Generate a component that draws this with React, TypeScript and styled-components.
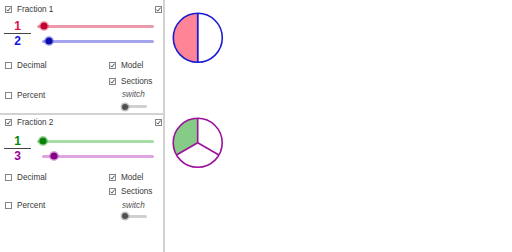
import React from "react";
import styled, { createGlobalStyle } from "styled-components";

const Global = createGlobalStyle`
  html, body { margin: 0; padding: 0; background: #fff; }
  body { font-family: "Liberation Sans", Arial, sans-serif; }
`;

const Page = styled.div`
  display: flex;
  width: 512px;
  height: 252px;
  overflow: hidden;
  background: #fff;
`;

const Panel = styled.aside`
  width: 165px;
  height: 252px;
  box-sizing: border-box;
  border-right: 2px solid #d2d2d2;
  display: flex;
  flex-direction: column;
  flex-shrink: 0;
`;

const Section = styled.section<{ $divider?: boolean; $padTop: number }>`
  box-sizing: border-box;
  height: ${(p) => (p.$divider ? "115px" : "auto")};
  flex: ${(p) => (p.$divider ? "0 0 auto" : "1")};
  padding: ${(p) => p.$padTop}px 0 0 5px;
  border-bottom: ${(p) => (p.$divider ? "2px solid #d2d2d2" : "none")};
  display: flex;
  flex-direction: column;
`;

const Header = styled.div`
  display: flex;
  align-items: center;
  justify-content: space-between;
  height: 10px;
  margin-right: 1px;
`;

const Label = styled.label`
  display: flex;
  align-items: center;
  gap: 5px;
  height: 10px;
  font-size: 8.2px;
  color: #383838;
  white-space: nowrap;
`;

const Box = styled.span`
  box-sizing: border-box;
  width: 7px;
  height: 7px;
  border: 1px solid #858585;
  background: #fff;
  display: inline-flex;
  align-items: center;
  justify-content: center;
  flex-shrink: 0;
`;

const Check = ({ on }: { on?: boolean }) => (
  <Box>
    {on && (
      <svg width="5" height="5" viewBox="0 0 5 5">
        <path d="M0.4 2.6 L1.9 4.1 L4.6 0.6" fill="none" stroke="#3a3a3a" strokeWidth="0.9" />
      </svg>
    )}
  </Box>
);

const FractionRow = styled.div<{ $gap: number }>`
  display: flex;
  margin-top: ${(p) => p.$gap}px;
  margin-left: -1px;
`;

const Fraction = styled.div`
  width: 27px;
  display: flex;
  flex-direction: column;
  align-items: center;
  flex-shrink: 0;
`;

const Num = styled.div<{ $color: string }>`
  height: 14px;
  line-height: 14px;
  font-size: 12px;
  font-weight: bold;
  color: ${(p) => p.$color};
`;

const Bar = styled.div`
  width: 100%;
  height: 1px;
  background: #444;
`;

const Sliders = styled.div`
  flex: 1;
  display: flex;
  flex-direction: column;
  gap: 1px;
  margin-left: 6px;
  margin-right: 9px;
`;

const SliderRow = styled.div<{ $indent?: number }>`
  height: 14px;
  display: flex;
  align-items: center;
  padding-left: ${(p) => p.$indent ?? 0}px;
`;

const Track = styled.div<{ $color: string; $w?: number }>`
  position: relative;
  height: 3px;
  border-radius: 1.5px;
  width: ${(p) => (p.$w ? `${p.$w}px` : "100%")};
  background: ${(p) => p.$color};
`;

const Thumb = styled.span<{ $color: string; $halo: string; $size?: number }>`
  position: absolute;
  top: 50%;
  width: ${(p) => p.$size ?? 7}px;
  height: ${(p) => p.$size ?? 7}px;
  border-radius: 50%;
  background: ${(p) => p.$color};
  box-shadow: 0 0 0 1.5px ${(p) => p.$halo};
  transform: translate(-50%, -50%);
`;

const Options = styled.div<{ $top: number; $rows: string }>`
  display: grid;
  grid-template-columns: 104px auto;
  grid-template-rows: ${(p) => p.$rows};
  align-items: start;
  margin-top: ${(p) => p.$top}px;
`;

const Cell = styled.div<{ $col: number; $row: number }>`
  grid-column: ${(p) => p.$col};
  grid-row: ${(p) => p.$row};
`;

const SwitchLabel = styled.div`
  height: 10px;
  line-height: 10px;
  margin-left: 13px;
  font-size: 8.2px;
  font-style: italic;
  color: #555;
`;

const SwitchRow = styled.div`
  height: 10px;
  display: flex;
  align-items: center;
  margin-left: 16px;
`;

const Graphics = styled.main`
  flex: 1;
  height: 252px;
`;

type Frac = {
  title: string;
  num: string;
  den: string;
  numColor: string;
  denColor: string;
  numTrack: string;
  denTrack: string;
  numThumb: string;
  denThumb: string;
  numHalo: string;
  denHalo: string;
  numPos: number;
  denPos: number;
};

const ControlBlock = ({
  f,
  divider,
  padTop,
  fracGap,
  optTop,
  rows,
}: {
  f: Frac;
  divider?: boolean;
  padTop: number;
  fracGap: number;
  optTop: number;
  rows: string;
}) => (
  <Section $divider={divider} $padTop={padTop}>
    <Header>
      <Label>
        <Check on />
        {f.title}
      </Label>
      <Check on />
    </Header>
    <FractionRow $gap={fracGap}>
      <Fraction>
        <Num $color={f.numColor}>{f.num}</Num>
        <Bar />
        <Num $color={f.denColor}>{f.den}</Num>
      </Fraction>
      <Sliders>
        <SliderRow>
          <Track $color={f.numTrack}>
            <Thumb $color={f.numThumb} $halo={f.numHalo} style={{ left: f.numPos }} />
          </Track>
        </SliderRow>
        <SliderRow $indent={5}>
          <Track $color={f.denTrack}>
            <Thumb $color={f.denThumb} $halo={f.denHalo} style={{ left: f.denPos }} />
          </Track>
        </SliderRow>
      </Sliders>
    </FractionRow>
    <Options $top={optTop} $rows={rows}>
      <Cell $col={1} $row={1}>
        <Label>
          <Check />
          Decimal
        </Label>
      </Cell>
      <Cell $col={2} $row={1}>
        <Label>
          <Check on />
          Model
        </Label>
      </Cell>
      <Cell $col={2} $row={2}>
        <Label>
          <Check on />
          Sections
        </Label>
      </Cell>
      <Cell $col={1} $row={3}>
        <Label>
          <Check />
          Percent
        </Label>
      </Cell>
      <Cell $col={2} $row={3}>
        <SwitchLabel>switch</SwitchLabel>
      </Cell>
      <Cell $col={2} $row={4}>
        <SwitchRow>
          <Track $color="#d0d0d0" $w={22}>
            <Thumb $color="#505050" $halo="rgba(80,80,80,0.35)" $size={6} style={{ left: 0 }} />
          </Track>
        </SwitchRow>
      </Cell>
    </Options>
  </Section>
);

const frac1: Frac = {
  title: "Fraction 1",
  num: "1",
  den: "2",
  numColor: "#e0103c",
  denColor: "#1414dc",
  numTrack: "#eb9aab",
  denTrack: "#a4a4ee",
  numThumb: "#c4002c",
  denThumb: "#0c0ca8",
  numHalo: "rgba(220,60,100,0.45)",
  denHalo: "rgba(60,60,220,0.4)",
  numPos: 7,
  denPos: 7,
};

const frac2: Frac = {
  title: "Fraction 2",
  num: "1",
  den: "3",
  numColor: "#008a00",
  denColor: "#9a009a",
  numTrack: "#a6dca6",
  denTrack: "#e0a4e0",
  numThumb: "#0a820a",
  denThumb: "#840084",
  numHalo: "rgba(40,160,40,0.45)",
  denHalo: "rgba(180,60,180,0.45)",
  numPos: 6,
  denPos: 12,
};

const r = 24.5;
const c1 = { x: 32.8, y: 37.8 };
const c2 = { x: 32.7, y: 142.8 };
const a210 = { x: c2.x - r * Math.cos(Math.PI / 6), y: c2.y + r * Math.sin(Math.PI / 6) };
const a330 = { x: c2.x + r * Math.cos(Math.PI / 6), y: c2.y + r * Math.sin(Math.PI / 6) };

export default function App() {
  return (
    <>
      <Global />
      <Page>
        <Panel>
          <ControlBlock f={frac1} divider padTop={4} fracGap={5} optTop={12} rows="16px 14px 11.5px 10px" />
          <ControlBlock f={frac2} padTop={2} fracGap={7} optTop={9.5} rows="14px 14px 10.5px 10px" />
        </Panel>
        <Graphics>
          <svg width="347" height="252" viewBox="0 0 347 252">
            <path
              d={`M${c1.x} ${c1.y - r} A${r} ${r} 0 0 0 ${c1.x} ${c1.y + r} Z`}
              fill="#ff8496"
            />
            <circle cx={c1.x} cy={c1.y} r={r} fill="none" stroke="#1c1cd4" strokeWidth="1.6" />
            <line x1={c1.x} y1={c1.y - r} x2={c1.x} y2={c1.y + r} stroke="#1c1cd4" strokeWidth="1.8" />

            <path
              d={`M${c2.x} ${c2.y} L${c2.x} ${c2.y - r} A${r} ${r} 0 0 0 ${a210.x} ${a210.y} Z`}
              fill="#86cc86"
            />
            <circle cx={c2.x} cy={c2.y} r={r} fill="none" stroke="#9c109c" strokeWidth="1.6" />
            <line x1={c2.x} y1={c2.y} x2={c2.x} y2={c2.y - r} stroke="#9c109c" strokeWidth="1.6" />
            <line x1={c2.x} y1={c2.y} x2={a210.x} y2={a210.y} stroke="#9c109c" strokeWidth="1.6" />
            <line x1={c2.x} y1={c2.y} x2={a330.x} y2={a330.y} stroke="#9c109c" strokeWidth="1.6" />
          </svg>
        </Graphics>
      </Page>
    </>
  );
}
